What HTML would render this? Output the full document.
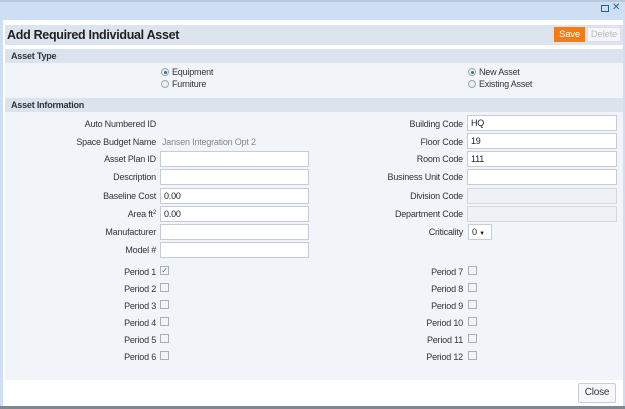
<!DOCTYPE html><html><head><style>
*{margin:0;padding:0;box-sizing:border-box}
body{width:625px;height:409px;background:#cfdff3;font-family:"Liberation Sans",sans-serif;font-size:9px;color:#333;position:relative;overflow:hidden;letter-spacing:-0.2px}
.a{position:absolute}
.lbl{position:absolute;text-align:right;white-space:nowrap;line-height:16px}
.in{position:absolute;height:16px;background:#fff;border:1px solid #c5ccd6;padding-left:3px;line-height:14px;color:#222}
.dis{background:#eef1f5;border-color:#d3d8de}
.rad{position:absolute;width:8px;height:8px;border-radius:50%;border:1px solid #9aa;background:#eee}
.rad.on::after{content:"";position:absolute;left:1.5px;top:1.5px;width:3px;height:3px;border-radius:50%;background:#2f6fb0}
.cb{position:absolute;width:9px;height:9px;border:1px solid #a8afb8;background:#f4f4f4}
.hdr{position:absolute;left:5px;width:618px;background:#dae3ee;font-weight:bold;font-size:9px;padding-left:6px;line-height:14px}
sup{font-size:6px;line-height:0;vertical-align:3px}
</style></head><body>
<div class="a" style="left:0;top:0;width:625px;height:2px;background:#b9c9dc"></div>
<div class="a" style="left:601px;top:5px;width:8px;height:7px;border:1px solid #2a5a9a"></div>
<div class="a" style="left:612px;top:2px;font-size:10px;color:#2a5a9a">✕</div>
<div class="a" style="left:3px;top:20px;width:620px;height:386px;background:#fff"></div>
<div class="a" style="left:5px;top:25px;width:618px;height:20px;background:#dce4ee"></div>
<div class="a" style="left:7px;top:27px;font-size:12.5px;font-weight:bold;color:#222;line-height:16px;letter-spacing:-0.3px">Add Required Individual Asset</div>
<div class="a" style="left:554px;top:27px;width:31px;height:15px;background:#f07c1a;color:#fff;text-align:center;line-height:15px;font-size:9.5px">Save</div>
<div class="a" style="left:587px;top:27px;width:34px;height:15px;background:#f4f6f9;border:1px solid #dde;color:#bbb;text-align:center;line-height:13px;font-size:9.5px">Delete</div>
<div class="a" style="left:5px;top:49px;width:618px;height:331px;background:#f1f4f8"></div>
<div class="hdr" style="top:49px">Asset Type</div>
<div class="hdr" style="top:98px">Asset Information</div>
<div class="rad on" style="left:161px;top:68px"></div><div class="lbl" style="left:172px;top:64px">Equipment</div>
<div class="rad" style="left:161px;top:80px"></div><div class="lbl" style="left:172px;top:76px">Furniture</div>
<div class="rad on" style="left:468px;top:68px"></div><div class="lbl" style="left:479px;top:64px">New Asset</div>
<div class="rad" style="left:468px;top:80px"></div><div class="lbl" style="left:479px;top:76px">Existing Asset</div>

<div class="lbl" style="right:469px;top:116px">Auto Numbered ID</div>
<div class="lbl" style="right:469px;top:134px">Space Budget Name</div>
<div class="lbl" style="left:162px;top:134px;color:#888">Jansen Integration Opt 2</div>
<div class="lbl" style="right:469px;top:151px">Asset Plan ID</div><div class="in" style="left:160px;top:151px;width:149px"></div>
<div class="lbl" style="right:469px;top:169px">Description</div><div class="in" style="left:160px;top:169px;width:149px"></div>
<div class="lbl" style="right:469px;top:188px">Baseline Cost</div><div class="in" style="left:160px;top:188px;width:149px">0.00</div>
<div class="lbl" style="right:469px;top:206px">Area ft<sup>2</sup></div><div class="in" style="left:160px;top:206px;width:149px">0.00</div>
<div class="lbl" style="right:469px;top:224px">Manufacturer</div><div class="in" style="left:160px;top:224px;width:149px"></div>
<div class="lbl" style="right:469px;top:242px">Model #</div><div class="in" style="left:160px;top:242px;width:149px"></div>

<div class="lbl" style="right:162px;top:116px">Building Code</div><div class="in" style="left:467px;top:115px;width:150px">HQ</div>
<div class="lbl" style="right:162px;top:134px">Floor Code</div><div class="in" style="left:467px;top:133px;width:150px">19</div>
<div class="lbl" style="right:162px;top:151px">Room Code</div><div class="in" style="left:467px;top:151px;width:150px">111</div>
<div class="lbl" style="right:162px;top:169px">Business Unit Code</div><div class="in" style="left:467px;top:169px;width:150px"></div>
<div class="lbl" style="right:162px;top:188px">Division Code</div><div class="in dis" style="left:467px;top:188px;width:150px"></div>
<div class="lbl" style="right:162px;top:206px">Department Code</div><div class="in dis" style="left:467px;top:206px;width:150px"></div>
<div class="lbl" style="right:162px;top:224px">Criticality</div><div class="in" style="left:468px;top:224px;width:24px">0 <span style="font-size:6px">▼</span></div>

<div class="lbl" style="right:469px;top:264px">Period 1</div><div class="cb" style="left:160px;top:266px;color:#3a6eb0;font-size:8px;line-height:7px;text-align:center">✓</div>
<div class="lbl" style="right:469px;top:281px">Period 2</div><div class="cb" style="left:160px;top:283px"></div>
<div class="lbl" style="right:469px;top:298px">Period 3</div><div class="cb" style="left:160px;top:300px"></div>
<div class="lbl" style="right:469px;top:315px">Period 4</div><div class="cb" style="left:160px;top:317px"></div>
<div class="lbl" style="right:469px;top:332px">Period 5</div><div class="cb" style="left:160px;top:334px"></div>
<div class="lbl" style="right:469px;top:349px">Period 6</div><div class="cb" style="left:160px;top:351px"></div>
<div class="lbl" style="right:162px;top:264px">Period 7</div><div class="cb" style="left:468px;top:266px"></div>
<div class="lbl" style="right:162px;top:281px">Period 8</div><div class="cb" style="left:468px;top:283px"></div>
<div class="lbl" style="right:162px;top:298px">Period 9</div><div class="cb" style="left:468px;top:300px"></div>
<div class="lbl" style="right:162px;top:315px">Period 10</div><div class="cb" style="left:468px;top:317px"></div>
<div class="lbl" style="right:162px;top:332px">Period 11</div><div class="cb" style="left:468px;top:334px"></div>
<div class="lbl" style="right:162px;top:349px">Period 12</div><div class="cb" style="left:468px;top:351px"></div>

<div class="a" style="left:578px;top:383px;width:38px;height:20px;border:1px solid #c8ced6;border-radius:2px;background:#f6f7f9;text-align:center;line-height:18px;font-size:10px">Close</div>
<div class="a" style="left:0;top:406px;width:625px;height:3px;background:#7f8790"></div>
</body></html>
